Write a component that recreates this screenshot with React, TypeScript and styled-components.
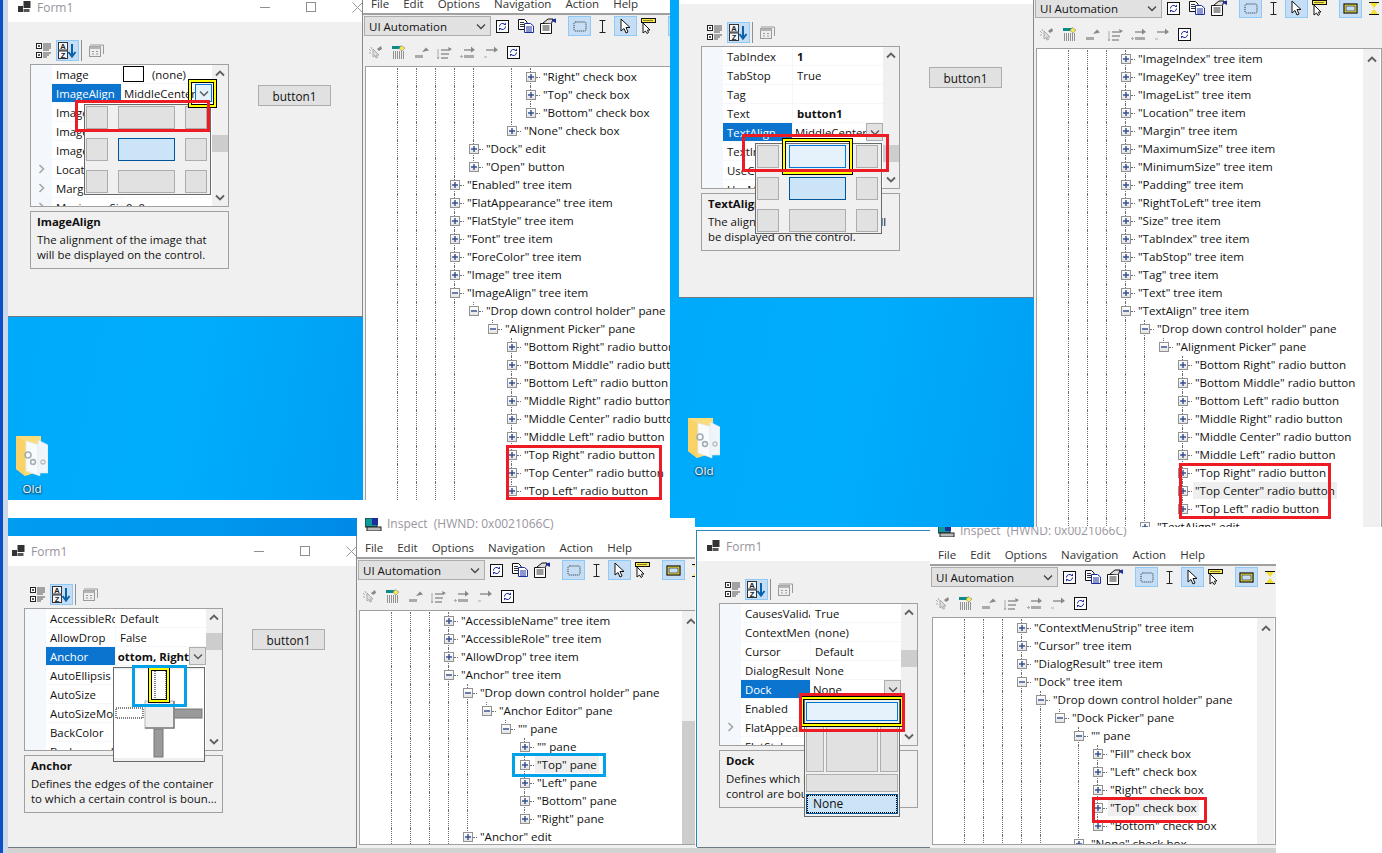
import React from 'react';
import styled, { createGlobalStyle } from 'styled-components';

const GlobalStyle = createGlobalStyle`
  html, body {
    margin: 0;
    padding: 0;
    background: #fff;
    overflow: hidden;
  }
  body {
    font-family: 'Open Sans', 'Liberation Sans', sans-serif;
    font-size: 11.4px;
    color: #111;
  }
`;

const Canvas = styled.div`
  position: relative;
  width: 1382px;
  height: 853px;
  overflow: hidden;
  background: #fff;
`;

const EdgeStrip = styled.div`
  position: absolute;
  left: 0;
  top: 0;
  width: 3px;
  height: 853px;
  background: #0b51c5;
  border-right: 5px solid #cdd7ea;
  z-index: 20;
`;

const BottomBar = styled.div`
  position: absolute;
  left: 8px;
  top: 848px;
  width: 1268px;
  height: 5px;
  background: #d2d2d2;
  z-index: 20;
`;

type Placed = { $x: number; $y: number; $w: number; $h: number; $z?: number };

const Desktop = styled.div<Placed & { $deep?: boolean }>`
  position: absolute;
  left: ${(p) => p.$x}px;
  top: ${(p) => p.$y}px;
  width: ${(p) => p.$w}px;
  height: ${(p) => p.$h}px;
  z-index: ${(p) => p.$z ?? 0};
  background: ${(p) =>
    p.$deep
      ? 'linear-gradient(100deg, #009cf2 0%, #0097ee 60%, #0089e6 100%)'
      : 'linear-gradient(100deg, #00a9fb 0%, #00adfc 55%, #009ff3 100%)'};
`;

const DesktopIcon = styled.div<{ $x: number; $y: number }>`
  position: absolute;
  left: ${(p) => p.$x}px;
  top: ${(p) => p.$y}px;
  width: 34px;
  display: flex;
  flex-direction: column;
  align-items: center;
  gap: 5px;
  color: #fff;
  font-size: 11.5px;
  line-height: 14px;
  text-shadow: 0 1px 2px #00324f, 0 0 2px #00324f;
`;

/* annotations drawn on top of the collage */
const Mark = styled.div<Placed & { $color: string }>`
  position: absolute;
  box-sizing: border-box;
  left: ${(p) => p.$x}px;
  top: ${(p) => p.$y}px;
  width: ${(p) => p.$w}px;
  height: ${(p) => p.$h}px;
  border: 3px solid ${(p) => p.$color};
  z-index: 30;
  pointer-events: none;
`;

const YellowMark = styled.div<Placed>`
  position: absolute;
  box-sizing: border-box;
  left: ${(p) => p.$x}px;
  top: ${(p) => p.$y}px;
  width: ${(p) => p.$w}px;
  height: ${(p) => p.$h}px;
  border: 1px solid #000;
  box-shadow: inset 0 0 0 2px #ffff00, inset 0 0 0 3px #000;
  z-index: 29;
  pointer-events: none;
`;

/* ---------- Form1 window ---------- */

const FormFrame = styled.div<{ $x: number; $y: number; $h: number; $z?: number; $framed?: boolean }>`
  position: absolute;
  left: ${(p) => p.$x}px;
  top: ${(p) => p.$y}px;
  width: 355px;
  height: ${(p) => p.$h}px;
  z-index: ${(p) => p.$z ?? 1};
  box-sizing: border-box;
  display: flex;
  flex-direction: column;
  background: #f0f0f0;
  border-right: 1px solid #8a8a8a;
  border-bottom: 1px solid #6c7a86;
  box-shadow: ${(p) => (p.$framed ? '-1px -1px 0 #2a86b8' : 'none')};
  overflow: ${(p) => (p.$framed ? 'visible' : 'hidden')};
`;

const FormTitle = styled.div`
  flex: 0 0 30px;
  display: flex;
  align-items: center;
  background: #fff;
  color: #98929c;
  font-size: 12px;
  padding-left: 10px;
  gap: 6px;
  overflow: hidden;
`;

const TitleControls = styled.div`
  margin-left: auto;
  margin-right: -18px;
  display: flex;
`;

const TitleControl = styled.div`
  width: 46px;
  display: flex;
  align-items: center;
  justify-content: center;
`;

const FormBody = styled.div`
  flex: 1;
  display: flex;
  align-items: flex-start;
  padding: 18px 0 0 22px;
`;

const PropertyPane = styled.div`
  width: 199px;
  flex: none;
  display: flex;
  flex-direction: column;
`;

const GridToolbar = styled.div`
  height: 21px;
  margin-bottom: 3px;
  display: flex;
  align-items: center;
  padding-left: 6px;
`;

const SortButton = styled.div`
  box-sizing: border-box;
  width: 23px;
  height: 21px;
  margin-left: 5px;
  display: flex;
  align-items: center;
  justify-content: center;
  background: #c5def5;
  border: 1px solid #90c8f6;
`;

const GridSeparator = styled.div`
  width: 1px;
  height: 21px;
  margin: 0 7px 0 2px;
  background: #8f8f8f;
`;

const GridWrap = styled.div`
  position: relative;
  height: 143px;
`;

const Grid = styled.div`
  box-sizing: border-box;
  height: 143px;
  display: flex;
  overflow: hidden;
  background: #fff;
  border: 1px solid #a0a0a0;
`;

const GridRows = styled.div`
  flex: 1;
  min-width: 0;
`;

const GridRow = styled.div`
  display: flex;
  height: 19px;
  box-sizing: border-box;
  border-bottom: 1px solid #f4f7fc;
`;

const Gutter = styled.div`
  flex: 0 0 21px;
  background: #f4f7fc;
  display: flex;
  align-items: center;
  justify-content: center;
`;

const NameCell = styled.div<{ $selected?: boolean }>`
  flex: 0 0 70px;
  box-sizing: border-box;
  padding-left: 4px;
  line-height: 19px;
  white-space: nowrap;
  overflow: hidden;
  border-right: 1px solid #f4f7fc;
  background: ${(p) => (p.$selected ? '#0a74cf' : 'transparent')};
  color: ${(p) => (p.$selected ? '#fff' : '#111')};
`;

const ValueCell = styled.div<{ $bold?: boolean; $clipLeft?: boolean; $tight?: boolean }>`
  flex: 1;
  min-width: 0;
  display: flex;
  align-items: center;
  justify-content: ${(p) => (p.$clipLeft ? 'flex-end' : 'flex-start')};
  margin-left: ${(p) => (p.$clipLeft ? '2px' : '0')};
  padding-left: ${(p) => (p.$tight ? '2px' : '4px')};
  line-height: 19px;
  white-space: nowrap;
  overflow: hidden;
  font-weight: ${(p) => (p.$bold ? 700 : 400)};
`;

const ValueText = styled.span`
  flex: 0 1 auto;
  min-width: 0;
  overflow: hidden;
`;

const ClippedValue = styled.span`
  flex: none;
`;

const Swatch = styled.span`
  flex: none;
  width: 19px;
  height: 14px;
  margin: 0 8px 0 -3px;
  border: 1px solid #000;
  background: #fff;
`;

const DropButton = styled.div<{ $hover?: boolean; $pinned?: boolean }>`
  flex: none;
  box-sizing: border-box;
  width: 17px;
  height: 18px;
  margin-left: ${(p) => (p.$pinned ? '0' : 'auto')};
  display: flex;
  align-items: center;
  justify-content: center;
  background: ${(p) => (p.$hover ? '#e5f1fb' : '#e1e1e1')};
  border: 1px solid ${(p) => (p.$hover ? '#0078d7' : '#adadad')};
`;

const GridScroll = styled.div`
  flex: 0 0 16px;
  display: flex;
  flex-direction: column;
  align-items: stretch;
  background: #f0f0f0;
`;

const ScrollArrow = styled.div<{ $end?: boolean }>`
  flex: 0 0 17px;
  display: flex;
  align-items: center;
  justify-content: center;
  margin-top: ${(p) => (p.$end ? 'auto' : '0')};
`;

const ScrollThumb = styled.div<{ $offset: number }>`
  flex: 0 0 17px;
  margin-top: ${(p) => p.$offset}px;
  background: #cdcdcd;
`;

const DescBox = styled.div`
  box-sizing: border-box;
  margin-top: 4px;
  height: 58px;
  padding: 2px 6px;
  border: 1px solid #a0a0a0;
  line-height: 15px;
  white-space: nowrap;
  overflow: hidden;
`;

const DescTitle = styled.div`
  font-weight: 700;
  margin-bottom: 3px;
`;

const FormButton = styled.div`
  box-sizing: border-box;
  flex: none;
  width: 73px;
  height: 21px;
  margin: 45px 0 0 29px;
  display: flex;
  align-items: center;
  justify-content: center;
  background: #e1e1e1;
  border: 1px solid #adadad;
  font-size: 11.8px;
`;

/* ---------- drop downs opened over the grid ---------- */

const DropOverlay = styled.div<{ $left: number; $top: number }>`
  position: absolute;
  left: ${(p) => p.$left}px;
  top: ${(p) => p.$top}px;
  box-sizing: border-box;
  z-index: 5;
  border: 1px solid #696969;
  background: #f0f0f0;
`;

const PickerGrid = styled.div`
  width: 125px;
  height: 89px;
  box-sizing: border-box;
  padding: 1px;
  display: grid;
  grid-template-columns: 22px 57px 22px;
  grid-auto-rows: 23px;
  column-gap: 10px;
  row-gap: 9px;
`;

type CellState = 'idle' | 'hover' | 'checked';

const cellFill = { idle: '#e1e1e1', hover: '#e5f1fb', checked: '#cce4f7' };
const cellLine = { idle: '#adadad', hover: '#0078d7', checked: '#005499' };

const PickerCell = styled.div<{ $state: CellState }>`
  box-sizing: border-box;
  background: ${(p) => cellFill[p.$state]};
  border: 1px solid ${(p) => cellLine[p.$state]};
`;

const DockGrid = styled.div`
  width: 94px;
  height: 118px;
  box-sizing: border-box;
  padding: 4px 1px 2px 1px;
  display: grid;
  grid-template-columns: 18px 52px 18px;
  grid-template-rows: 19px 49px 18px 20px;
  gap: 2px;
`;

const DockCell = styled(PickerCell)<{ $wide?: boolean }>`
  grid-column: ${(p) => (p.$wide ? '1 / 4' : 'auto')};
`;

const DockNone = styled(DockCell)`
  outline: 1px dotted #000;
  outline-offset: -2px;
  border-color: #005499;
  padding-left: 6px;
  line-height: 18px;
  font-size: 12px;
`;

/* ---------- Inspect window ---------- */

const InspectFrame = styled.div<Placed>`
  position: absolute;
  left: ${(p) => p.$x}px;
  top: ${(p) => p.$y}px;
  width: ${(p) => p.$w}px;
  height: ${(p) => p.$h}px;
  z-index: ${(p) => p.$z ?? 2};
  overflow: hidden;
  background: #f0f0f0;
`;

const InspectInner = styled.div<{ $w: number }>`
  width: ${(p) => p.$w}px;
  height: 100%;
  display: flex;
  flex-direction: column;
`;

const InspectTitle = styled.div<{ $h: number; $raise: number }>`
  flex: 0 0 ${(p) => p.$h}px;
  box-sizing: border-box;
  display: flex;
  align-items: center;
  gap: 4px;
  padding: 0 0 ${(p) => p.$raise}px 8px;
  background: #fff;
  color: #9a959e;
  font-size: 12px;
  white-space: pre;
  overflow: hidden;
`;

const MenuBar = styled.div`
  flex: 0 0 20px;
  box-sizing: content-box;
  display: flex;
  align-items: center;
  padding-left: 1px;
  background: #fff;
  border-bottom: 2px solid #a0a0a0;
  font-size: 11.5px;
  color: #333;
`;

const MenuItem = styled.span`
  padding: 0 7px;
  color: #333;
`;

const ToolRow = styled.div`
  flex: 0 0 22px;
  display: flex;
  align-items: center;
`;

const ToolRowTwo = styled.div`
  flex: 0 0 29px;
  box-sizing: border-box;
  display: flex;
  align-items: center;
  padding: 2px 0 0 1px;
`;

const ModeCombo = styled.div`
  box-sizing: border-box;
  flex: none;
  width: 127px;
  height: 20px;
  margin-left: 1px;
  padding: 0 4px;
  display: flex;
  align-items: center;
  justify-content: space-between;
  background: #e1e1e1;
  border: 1px solid #adadad;
  font-size: 11.5px;
`;

const ToolSlot = styled.div<{ $on?: boolean; $gap?: boolean }>`
  box-sizing: border-box;
  flex: none;
  width: 23px;
  height: 20px;
  margin-left: ${(p) => (p.$gap ? '8px' : '0')};
  display: flex;
  align-items: center;
  justify-content: center;
  background: ${(p) => (p.$on ? '#c5def5' : 'transparent')};
  border: 1px solid ${(p) => (p.$on ? '#90c8f6' : 'transparent')};
`;

const TreeBox = styled.div<{ $end: number }>`
  flex: 1;
  min-height: 0;
  margin: 0 0 ${(p) => p.$end}px 2px;
  display: flex;
  background: #fff;
  border: 1px solid #a0a0a0;
  overflow: hidden;
`;

const TreeRows = styled.div`
  flex: 1;
  min-width: 0;
  padding: 1px 0 0 22px;
  overflow: hidden;
`;

const TreeRowLine = styled.div`
  display: flex;
  height: 18px;
  white-space: nowrap;
`;

const Guide = styled.div<{ $on: boolean }>`
  flex: none;
  width: 10px;
  margin-left: 9px;
  border-left: 1px ${(p) => (p.$on ? 'dotted #6f6f6f' : 'solid transparent')};
  box-sizing: border-box;
`;

const ExpanderCell = styled.div<{ $more: boolean }>`
  flex: none;
  position: relative;
  width: 19px;
  height: 18px;
  display: flex;
  align-items: center;
  &::before {
    content: '';
    position: absolute;
    left: 9px;
    top: 0;
    height: ${(p) => (p.$more ? '100%' : '50%')};
    border-left: 1px dotted #6f6f6f;
  }
  &::after {
    content: '';
    position: absolute;
    left: 15px;
    top: 9px;
    width: 4px;
    border-top: 1px dotted #6f6f6f;
  }
`;

const Expander = styled.div<{ $open: boolean }>`
  position: relative;
  z-index: 1;
  box-sizing: border-box;
  width: 10px;
  height: 10px;
  margin-left: 5px;
  border: 1px solid #919191;
  background: linear-gradient(#fff, #e4e4e4);
  &::before {
    content: '';
    position: absolute;
    left: 1px;
    top: 3px;
    width: 6px;
    height: 2px;
    background: #2f4a8c;
    transform: scaleY(0.7);
  }
  &::after {
    content: '';
    display: ${(p) => (p.$open ? 'none' : 'block')};
    position: absolute;
    left: 3px;
    top: 1px;
    width: 2px;
    height: 6px;
    background: #2f4a8c;
    transform: scaleX(0.7);
  }
`;

const TreeLabel = styled.div<{ $selected?: boolean }>`
  height: 17px;
  line-height: 17px;
  margin-left: 1px;
  padding: 0 2px;
  background: ${(p) => (p.$selected ? '#efefef' : 'transparent')};
  font-size: 11.6px;
`;

const TreeScroll = styled.div`
  flex: 0 0 17px;
  margin-right: 1px;
  display: flex;
  flex-direction: column;
  background: #f0f0f0;
`;

const TreeArrow = styled.div`
  flex: 0 0 20px;
  display: flex;
  align-items: center;
  justify-content: center;
`;

const TreeThumb = styled.div<{ $offset: number }>`
  flex: 1;
  margin-top: ${(p) => p.$offset}px;
  background: #cdcdcd;
`;

/* ---------- drawings ---------- */

const Chevron = ({ up = false, color = '#555', w = 1.3 }: { up?: boolean; color?: string; w?: number }) => (
  <svg width="10" height="7" viewBox="0 0 10 7">
    <path d={up ? 'M1 5.5L5 1.5L9 5.5' : 'M1 1.5L5 5.5L9 1.5'} fill="none" stroke={color} strokeWidth={w} />
  </svg>
);

const SideChevron = () => (
  <svg width="7" height="10" viewBox="0 0 7 10">
    <path d="M1.5 1L5.5 5L1.5 9" fill="none" stroke="#a5a5a5" strokeWidth="1.6" />
  </svg>
);

const FormIcon = () => (
  <svg width="13" height="12" viewBox="0 0 13 12">
    <rect x="0" y="5" width="5" height="6" fill="#333" />
    <rect x="5.5" y="0" width="7" height="7" fill="#333" />
    <rect x="5.5" y="8" width="6" height="3" fill="#555" />
  </svg>
);

const MinimizeGlyph = () => (
  <svg width="10" height="10"><path d="M0 5.5H10" stroke="#8f8f8f" /></svg>
);
const MaximizeGlyph = () => (
  <svg width="10" height="10"><rect x=".5" y=".5" width="9" height="9" fill="none" stroke="#8f8f8f" /></svg>
);
const CloseGlyph = () => (
  <svg width="11" height="11"><path d="M.5 .5L10.5 10.5M10.5 .5L.5 10.5" stroke="#9a9a9a" /></svg>
);

const CategorizedIcon = () => (
  <svg width="15" height="15" viewBox="0 0 15 15">
    <rect x="0.5" y="0.5" width="5" height="5" fill="#fff" stroke="#222" />
    <rect x="0.5" y="9.5" width="5" height="5" fill="#fff" stroke="#222" />
    <path d="M2 3H4M3 2V4M2 12H4M3 11V13" stroke="#222" />
    <path d="M7 1H15M7 3H15M7 5H15M7 7H13M7 10H15M7 12H13M7 14H11" stroke="#555" />
  </svg>
);

const AzIcon = () => (
  <svg width="19" height="17" viewBox="0 0 19 17">
    <rect x="0.5" y="0.5" width="9" height="7.5" fill="#f4f8fc" stroke="#333" />
    <rect x="0.5" y="9" width="9" height="7.5" fill="#f4f8fc" stroke="#333" />
    <text x="5" y="7" fontSize="7.5" fontWeight="700" textAnchor="middle" fontFamily="Liberation Sans" fill="#222">A</text>
    <text x="5" y="15.5" fontSize="7.5" fontWeight="700" textAnchor="middle" fontFamily="Liberation Sans" fill="#222">Z</text>
    <path d="M14 2V13M10.5 10L14 14.5L17.5 10" fill="none" stroke="#0a62a8" strokeWidth="2" />
  </svg>
);

const PagesIcon = () => (
  <svg width="15" height="13" viewBox="0 0 15 13">
    <rect x="0.5" y="2.5" width="11" height="10" fill="#eee" stroke="#9a9a9a" />
    <path d="M1 1H14.5V10" fill="none" stroke="#9a9a9a" />
    <rect x="0.5" y="2.5" width="11" height="2.5" fill="#b4b4b4" />
    <path d="M3 7.5H5M3 10H5M7 7.5H9M7 10H9" stroke="#999" />
  </svg>
);

const FolderIcon = () => (
  <svg width="32" height="42" viewBox="0 0 32 42">
    <path d="M0 1H25V36L9 41L0 34Z" fill="#fbdc7c" />
    <path d="M0 1L9 6V41L0 34Z" fill="#f9d268" />
    <path d="M10 6L24 10V41L10 36Z" fill="#f7fbfd" stroke="#dce6ea" strokeWidth=".6" />
    <path d="M22 5L32 10V38L22 38Z" fill="#eef6fb" stroke="#dce6ea" strokeWidth=".6" />
    <circle cx="12" cy="20" r="3" fill="none" stroke="#a5aeb4" strokeWidth="1.6" />
    <circle cx="17" cy="27" r="2.4" fill="none" stroke="#a5aeb4" strokeWidth="1.6" />
    <circle cx="27" cy="27" r="2" fill="none" stroke="#b7bfc4" strokeWidth="1.4" />
  </svg>
);

const RefreshIcon = () => (
  <svg width="13" height="13" viewBox="0 0 13 13">
    <rect x="0.5" y="0.5" width="12" height="12" fill="#fff" stroke="#111" />
    <path d="M3.5 6.5A3 3 0 0 1 8.6 4.3M9.5 6.5A3 3 0 0 1 4.4 8.7" fill="none" stroke="#1c2d9c" />
    <path d="M7.5 5H10V2.5ZM5.5 8H3V10.5Z" fill="#1c2d9c" />
  </svg>
);

const CopyIcon = () => (
  <svg width="16" height="14" viewBox="0 0 16 14">
    <path d="M.5 .5H6.5L9 3V10.5H.5Z" fill="#fff" stroke="#111" />
    <path d="M2 3.5H6M2 5.5H6M2 7.5H6" stroke="#333" />
    <path d="M6.5 4.5H12.5L15.5 7V13.5H6.5Z" fill="#fff" stroke="#1c2d9c" />
    <path d="M8 8H14M8 10H14M8 12H14" stroke="#1c2d9c" />
  </svg>
);

const PropsIcon = () => (
  <svg width="17" height="16" viewBox="0 0 17 16">
    <path d="M.5 5.5H11.5V15.5H.5Z" fill="#fff" stroke="#111" />
    <path d="M2.5 8H9.5M2.5 10H9.5M2.5 12H9.5" stroke="#333" />
    <path d="M3 5L8 1H13L11.5 5.5" fill="#ddd" stroke="#111" />
    <path d="M12 1.5L16 .5V5L13 3.5Z" fill="#1c2d9c" />
  </svg>
);

const FocusRectIcon = () => (
  <svg width="14" height="11" viewBox="0 0 14 11">
    <rect x="1" y="1" width="12" height="9" rx="1.5" fill="none" stroke="#222" strokeDasharray="1 1" />
  </svg>
);

const CaretIcon = () => (
  <svg width="7" height="13" viewBox="0 0 7 13">
    <path d="M.5 .5H6.5M.5 12.5H6.5M3.5 .5V12.5" fill="none" stroke="#222" />
  </svg>
);

const ArrowCursor = () => (
  <svg width="11" height="16" viewBox="0 0 11 16">
    <path d="M1 1V13L4 10.5L6 15L8 14L6 9.5H10Z" fill="#fff" stroke="#111" />
  </svg>
);

const TooltipIcon = () => (
  <svg width="15" height="16" viewBox="0 0 15 16">
    <rect x="0.5" y="0.5" width="14" height="4" fill="#f7ea4a" stroke="#111" />
    <path d="M2.5 2.5H12" stroke="#111" strokeDasharray="1 1" />
    <path d="M2 5V15L4.5 13L6 15.5L7.5 14.5L6.5 12H9Z" fill="#fff" stroke="#111" />
  </svg>
);

const HighlightIcon = () => (
  <svg width="15" height="11" viewBox="0 0 15 11">
    <rect x="1" y="1" width="13" height="9" fill="#f7ea4a" stroke="#111" strokeWidth="1.2" />
    <rect x="3" y="3" width="9" height="5" fill="#c5def5" stroke="#111" strokeWidth=".6" />
  </svg>
);

const HourglassIcon = () => (
  <svg width="10" height="13" viewBox="0 0 10 13">
    <path d="M0 .5H10M0 12.5H10" stroke="#111" />
    <path d="M1 1H9L5 6ZM1 12L5 7L9 12Z" fill="#f2e02c" />
  </svg>
);

const WatchPointerIcon = () => (
  <svg width="15" height="15" viewBox="0 0 15 15">
    <path d="M5 4V12L7 10.5L8 13L9.5 12.5L8.5 10H11Z" fill="#ddd" stroke="#aaa" />
    <path d="M9 4L13 1L14 4L11 6Z" fill="#888" />
    <path d="M1 4L3 6M1 8H3M3 2L4 4" stroke="#aaa" />
  </svg>
);

const MarkerIcon = () => (
  <svg width="14" height="15" viewBox="0 0 14 15">
    <rect x="0" y="1" width="10" height="3" fill="#0d8a8a" />
    <path d="M9 .5L13 3L10 6L7 3.5Z" fill="#f7ea4a" stroke="#777" strokeWidth=".5" />
    <path d="M1 7H12M1 9H12M1 11H12M1 13H12" stroke="#333" strokeDasharray="1 1" />
  </svg>
);

const ParentArrowIcon = () => (
  <svg width="14" height="14" viewBox="0 0 14 14">
    <rect x="0" y="9" width="8" height="3" fill="#aaa" />
    <path d="M7 6L11 1.5L14 4.5Z" fill="#888" />
  </svg>
);

const ChildArrowIcon = () => (
  <svg width="15" height="14" viewBox="0 0 15 14">
    <path d="M1 3V13M0 11L1 13L2 11" fill="none" stroke="#aaa" />
    <rect x="4" y="3" width="8" height="2" fill="#aaa" />
    <rect x="4" y="7" width="8" height="2" fill="#aaa" />
    <rect x="4" y="11" width="7" height="2" fill="#aaa" />
    <path d="M11 1L15 3L12 5Z" fill="#888" />
  </svg>
);

const NextArrowIcon = () => (
  <svg width="16" height="14" viewBox="0 0 16 14">
    <rect x="4" y="3" width="8" height="2" fill="#aaa" />
    <path d="M11 0.5L15 4L11 6.5Z" fill="#888" />
    <rect x="4" y="9" width="10" height="3" fill="#aaa" />
    <path d="M0 10.5H3M1.5 9V12" stroke="#aaa" />
  </svg>
);

const PrevArrowIcon = () => (
  <svg width="16" height="14" viewBox="0 0 16 14">
    <rect x="3" y="3" width="9" height="2" fill="#aaa" />
    <path d="M11 0.5L15 4L11 6.5Z" fill="#888" />
    <path d="M1 11H4" stroke="#aaa" />
  </svg>
);

const InspectIcon = () => (
  <svg width="18" height="14" viewBox="0 0 18 14">
    <rect x="0" y="1" width="12" height="9" fill="#0d9a9a" stroke="#222" />
    <rect x="7" y="0" width="6" height="8" fill="#1c2d9c" />
    <rect x="2" y="10" width="14" height="4" fill="#bbb" stroke="#222" />
  </svg>
);

const AnchorDiagram = () => (
  <svg width="90" height="90" viewBox="0 0 90 90">
    <rect x="0" y="0" width="90" height="90" fill="#fff" />
    <rect x="0" y="0" width="90" height="1.5" fill="#eee" />
    <rect x="41" y="2" width="11" height="30" fill="#fff" stroke="#000" strokeDasharray="1 1" />
    <rect x="2" y="40" width="27" height="10" fill="#fff" stroke="#000" strokeDasharray="1 1" />
    <rect x="60" y="41" width="28" height="9" fill="#9a9a9a" stroke="#777" />
    <rect x="40" y="61" width="9" height="28" fill="#9a9a9a" stroke="#777" />
    <rect x="31" y="33" width="29" height="27" fill="#eee" stroke="#b5b5b5" />
    <path d="M60 33V60H31" fill="none" stroke="#808080" strokeWidth="1.6" />
  </svg>
);

/* ---------- data ---------- */

type TreeItem = { level: number; label: string; open?: boolean; selected?: boolean };

const item = (level: number, label: string, open = false, selected = false): TreeItem => ({
  level,
  label,
  open,
  selected,
});

const alignmentRows = [
  '"Bottom Right" radio button',
  '"Bottom Middle" radio button',
  '"Bottom Left" radio button',
  '"Middle Right" radio button',
  '"Middle Center" radio button',
  '"Middle Left" radio button',
  '"Top Right" radio button',
  '"Top Center" radio button',
  '"Top Left" radio button',
].map((label) => item(6, label));

const imageAlignTree: TreeItem[] = [
  item(7, '"Right" check box'),
  item(7, '"Top" check box'),
  item(7, '"Bottom" check box'),
  item(6, '"None" check box'),
  item(4, '"Dock" edit'),
  item(4, '"Open" button'),
  ...['Enabled', 'FlatAppearance', 'FlatStyle', 'Font', 'ForeColor', 'Image'].map((n) =>
    item(3, `"${n}" tree item`),
  ),
  item(3, '"ImageAlign" tree item', true),
  item(4, '"Drop down control holder" pane', true),
  item(5, '"Alignment Picker" pane', true),
  ...alignmentRows,
];

const textAlignTree: TreeItem[] = [
  ...[
    'ImageIndex',
    'ImageKey',
    'ImageList',
    'Location',
    'Margin',
    'MaximumSize',
    'MinimumSize',
    'Padding',
    'RightToLeft',
    'Size',
    'TabIndex',
    'TabStop',
    'Tag',
    'Text',
  ].map((n) => item(3, `"${n}" tree item`)),
  item(3, '"TextAlign" tree item', true),
  item(4, '"Drop down control holder" pane', true),
  item(5, '"Alignment Picker" pane', true),
  ...alignmentRows.map((r) =>
    r.label.includes('Top Center') ? { ...r, selected: true } : r,
  ),
  item(4, '"TextAlign" edit'),
];

const anchorTree: TreeItem[] = [
  item(3, '"AccessibleName" tree item'),
  item(3, '"AccessibleRole" tree item'),
  item(3, '"AllowDrop" tree item'),
  item(3, '"Anchor" tree item', true),
  item(4, '"Drop down control holder" pane', true),
  item(5, '"Anchor Editor" pane', true),
  item(6, '"" pane', true),
  item(7, '"" pane'),
  item(7, '"Top" pane', false, true),
  item(7, '"Left" pane'),
  item(7, '"Bottom" pane'),
  item(7, '"Right" pane'),
  item(4, '"Anchor" edit'),
];

const dockTree: TreeItem[] = [
  item(3, '"ContextMenuStrip" tree item'),
  item(3, '"Cursor" tree item'),
  item(3, '"DialogResult" tree item'),
  item(3, '"Dock" tree item', true),
  item(4, '"Drop down control holder" pane', true),
  item(5, '"Dock Picker" pane', true),
  item(6, '"" pane', true),
  item(7, '"Fill" check box'),
  item(7, '"Left" check box'),
  item(7, '"Right" check box'),
  item(7, '"Top" check box', false, true),
  item(7, '"Bottom" check box'),
  item(6, '"None" check box'),
];

type GridEntry = {
  name: string;
  value?: string;
  bold?: boolean;
  selected?: boolean;
  expand?: boolean;
  swatch?: boolean;
  drop?: 'plain' | 'hover';
  clipLeft?: boolean;
};

const imageGrid: GridEntry[] = [
  { name: 'Image', value: '(none)', swatch: true },
  { name: 'ImageAlign', value: 'MiddleCenter', selected: true, drop: 'hover' },
  { name: 'ImageIndex' },
  { name: 'ImageKey' },
  { name: 'ImageList' },
  { name: 'Location', expand: true },
  { name: 'Margin', expand: true },
  { name: 'MaximumSize', value: '0, 0', expand: true },
];

const textGrid: GridEntry[] = [
  { name: 'TabIndex', value: '1', bold: true },
  { name: 'TabStop', value: 'True' },
  { name: 'Tag' },
  { name: 'Text', value: 'button1', bold: true },
  { name: 'TextAlign', value: 'MiddleCenter', selected: true, drop: 'plain' },
  { name: 'TextImageRelation' },
  { name: 'UseCompatibleTextRendering' },
  { name: 'UseMnemonic' },
];

const anchorGrid: GridEntry[] = [
  { name: 'AccessibleRole', value: 'Default' },
  { name: 'AllowDrop', value: 'False' },
  { name: 'Anchor', value: 'Bottom, Right', bold: true, selected: true, drop: 'plain', clipLeft: true },
  { name: 'AutoEllipsis' },
  { name: 'AutoSize' },
  { name: 'AutoSizeMode' },
  { name: 'BackColor' },
  { name: 'BackgroundImage' },
];

const dockGrid: GridEntry[] = [
  { name: 'CausesValidation', value: 'True' },
  { name: 'ContextMenuStrip', value: '(none)' },
  { name: 'Cursor', value: 'Default' },
  { name: 'DialogResult', value: 'None' },
  { name: 'Dock', value: 'None', selected: true, drop: 'plain' },
  { name: 'Enabled' },
  { name: 'FlatAppearance', expand: true },
  { name: 'FlatStyle' },
];

const menuItems = ['File', 'Edit', 'Options', 'Navigation', 'Action', 'Help'];

/* ---------- parts ---------- */

// a guide column continues while a later row still sits on that column
const hasLine = (rows: TreeItem[], from: number, col: number, tail: number[]) => {
  for (let j = from + 1; j < rows.length; j++) {
    if (rows[j].level < col) return false;
    if (rows[j].level === col) return true;
  }
  return tail.includes(col);
};

const Tree: React.FC<{ rows: TreeItem[]; tail: number[] }> = ({ rows, tail }) => (
  <TreeRows>
    {rows.map((row, i) => (
      <TreeRowLine key={i}>
        {Array.from({ length: row.level }, (_, col) => (
          <Guide key={col} $on={hasLine(rows, i, col, tail)} />
        ))}
        <ExpanderCell $more={hasLine(rows, i, row.level, tail)}>
          <Expander $open={!!row.open} />
        </ExpanderCell>
        <TreeLabel $selected={row.selected}>{row.label}</TreeLabel>
      </TreeRowLine>
    ))}
  </TreeRows>
);

type InspectProps = {
  x: number;
  y: number;
  w: number;
  h: number;
  innerW?: number;
  z?: number;
  titleH?: number;
  titleRaise?: number;
  rows: TreeItem[];
  tail: number[];
  thumbAt?: number;
  bottomGap?: number;
};

const InspectWindow: React.FC<InspectProps> = ({
  x,
  y,
  w,
  h,
  innerW,
  z,
  titleH,
  titleRaise = 0,
  rows,
  tail,
  thumbAt,
  bottomGap = 0,
}) => (
  <InspectFrame $x={x} $y={y} $w={w} $h={h} $z={z}>
    <InspectInner $w={innerW ?? w}>
      {titleH ? (
        <InspectTitle $h={titleH} $raise={titleRaise}>
          <InspectIcon />
          {'Inspect  (HWND: 0x0021066C)'}
        </InspectTitle>
      ) : null}
      <MenuBar>
        {menuItems.map((m) => (
          <MenuItem key={m}>{m}</MenuItem>
        ))}
      </MenuBar>
      <ToolRow>
        <ModeCombo>
          UI Automation
          <Chevron color="#444" />
        </ModeCombo>
        <ToolSlot><RefreshIcon /></ToolSlot>
        <ToolSlot><CopyIcon /></ToolSlot>
        <ToolSlot><PropsIcon /></ToolSlot>
        <ToolSlot $on $gap><FocusRectIcon /></ToolSlot>
        <ToolSlot><CaretIcon /></ToolSlot>
        <ToolSlot $on><ArrowCursor /></ToolSlot>
        <ToolSlot><TooltipIcon /></ToolSlot>
        <ToolSlot $on $gap><HighlightIcon /></ToolSlot>
        <ToolSlot><HourglassIcon /></ToolSlot>
      </ToolRow>
      <ToolRowTwo>
        <ToolSlot><WatchPointerIcon /></ToolSlot>
        <ToolSlot><MarkerIcon /></ToolSlot>
        <ToolSlot><ParentArrowIcon /></ToolSlot>
        <ToolSlot><ChildArrowIcon /></ToolSlot>
        <ToolSlot><NextArrowIcon /></ToolSlot>
        <ToolSlot><PrevArrowIcon /></ToolSlot>
        <ToolSlot><RefreshIcon /></ToolSlot>
      </ToolRowTwo>
      <TreeBox $end={bottomGap}>
        <Tree rows={rows} tail={tail} />
        <TreeScroll>
          <TreeArrow><Chevron up color="#606060" w={1.8} /></TreeArrow>
          {thumbAt !== undefined ? <TreeThumb $offset={thumbAt} /> : null}
        </TreeScroll>
      </TreeBox>
    </InspectInner>
  </InspectFrame>
);

type FormProps = {
  x: number;
  y: number;
  h: number;
  z?: number;
  framed?: boolean;
  grid: GridEntry[];
  thumb: number;
  title: string;
  lines: string[];
  children?: React.ReactNode;
};

const FormWindow: React.FC<FormProps> = ({ x, y, h, z, framed, grid, thumb, title, lines, children }) => (
  <FormFrame $x={x} $y={y} $h={h} $z={z} $framed={framed}>
    <FormTitle>
      <FormIcon />
      Form1
      <TitleControls>
        <TitleControl><MinimizeGlyph /></TitleControl>
        <TitleControl><MaximizeGlyph /></TitleControl>
        <TitleControl><CloseGlyph /></TitleControl>
      </TitleControls>
    </FormTitle>
    <FormBody>
      <PropertyPane>
        <GridToolbar>
          <CategorizedIcon />
          <SortButton><AzIcon /></SortButton>
          <GridSeparator />
          <PagesIcon />
        </GridToolbar>
        <GridWrap>
          <Grid>
            <GridRows>
              {grid.map((row) => (
                <GridRow key={row.name}>
                  <Gutter>{row.expand ? <SideChevron /> : null}</Gutter>
                  <NameCell $selected={row.selected}>{row.name}</NameCell>
                  <ValueCell $bold={row.bold} $clipLeft={row.clipLeft} $tight={!!row.drop}>
                    {row.swatch ? <Swatch /> : null}
                    {row.clipLeft ? (
                      <ClippedValue>{row.value}</ClippedValue>
                    ) : (
                      <ValueText>{row.value}</ValueText>
                    )}
                    {row.drop ? (
                      <DropButton $hover={row.drop === 'hover'} $pinned={row.clipLeft}>
                        <Chevron color="#555" />
                      </DropButton>
                    ) : null}
                  </ValueCell>
                </GridRow>
              ))}
            </GridRows>
            <GridScroll>
              <ScrollArrow><Chevron up color="#606060" w={1.8} /></ScrollArrow>
              <ScrollThumb $offset={thumb} />
              <ScrollArrow $end><Chevron color="#606060" w={1.8} /></ScrollArrow>
            </GridScroll>
          </Grid>
          {children}
        </GridWrap>
        <DescBox>
          <DescTitle>{title}</DescTitle>
          {lines.map((l) => (
            <div key={l}>{l}</div>
          ))}
        </DescBox>
      </PropertyPane>
      <FormButton>button1</FormButton>
    </FormBody>
  </FormFrame>
);

const AlignmentPicker: React.FC<{ left: number; top: number; hover?: number }> = ({ left, top, hover }) => (
  <DropOverlay $left={left} $top={top}>
    <PickerGrid>
      {Array.from({ length: 9 }, (_, i) => (
        <PickerCell key={i} $state={i === 4 ? 'checked' : i === hover ? 'hover' : 'idle'} />
      ))}
    </PickerGrid>
  </DropOverlay>
);

const DockPicker: React.FC<{ left: number; top: number }> = ({ left, top }) => (
  <DropOverlay $left={left} $top={top}>
    <DockGrid>
      <DockCell $wide $state="hover" />
      <DockCell $state="idle" />
      <DockCell $state="idle" />
      <DockCell $state="idle" />
      <DockCell $wide $state="idle" />
      <DockNone $wide $state="checked">None</DockNone>
    </DockGrid>
  </DropOverlay>
);

export default function App() {
  return (
    <Canvas>
      <GlobalStyle />
      <EdgeStrip />

      <Desktop $x={8} $y={0} $w={355} $h={500}>
        <DesktopIcon $x={7} $y={435}>
          <FolderIcon />
          Old
        </DesktopIcon>
      </Desktop>
      <Desktop $x={8} $y={518} $w={349} $h={20} $z={1} $deep />
      <Desktop $x={670} $y={0} $w={365} $h={527} $z={5}>
        <DesktopIcon $x={17} $y={417}>
          <FolderIcon />
          Old
        </DesktopIcon>
      </Desktop>

      <FormWindow
        x={8}
        y={-8}
        h={325}
        grid={imageGrid}
        thumb={53}
        title="ImageAlign"
        lines={['The alignment of the image that', 'will be displayed on the control.']}
      >
        <AlignmentPicker left={54} top={40} />
      </FormWindow>
      <InspectWindow x={363} y={-7} w={338} h={507} z={1} rows={imageAlignTree} tail={[0, 1, 2, 3]} bottomGap={-2} />

      <FormWindow
        x={679}
        y={-26}
        h={324}
        z={6}
        grid={textGrid}
        thumb={81}
        title="TextAlign"
        lines={['The alignment of the text that will', 'be displayed on the control.']}
      >
        <AlignmentPicker left={54} top={97} hover={1} />
      </FormWindow>
      <InspectWindow x={1034} y={-25} w={348} h={552} z={6} rows={textAlignTree} tail={[0, 1, 2, 3]} bottomGap={-2} />

      <FormWindow
        x={2}
        y={536}
        h={312}
        z={7}
        grid={anchorGrid}
        thumb={7}
        title="Anchor"
        lines={['Defines the edges of the container', 'to which a certain control is boun...']}
      >
        <DropOverlay $left={89} $top={59}>
          <AnchorDiagram />
        </DropOverlay>
      </FormWindow>
      <InspectWindow
        x={357}
        y={518}
        w={338}
        innerW={344}
        h={330}
        z={8}
        titleH={19}
        titleRaise={8}
        rows={anchorTree}
        tail={[0, 1, 2, 3]}
        thumbAt={90}
        bottomGap={3}
      />

      <FormWindow
        x={697}
        y={531}
        h={317}
        z={3}
        framed
        grid={dockGrid}
        thumb={29}
        title="Dock"
        lines={['Defines which borders of the', 'control are bound to the contai...']}
      >
        <DockPicker left={85} top={94} />
      </FormWindow>
      <InspectWindow
        x={930}
        y={519}
        w={346}
        h={329}
        z={4}
        titleH={25}
        titleRaise={3}
        rows={dockTree}
        tail={[0, 1, 2, 3, 4]}
        bottomGap={3}
      />

      <BottomBar />

      <Mark $x={75} $y={100} $w={135} $h={32} $color="#ed1c24" />
      <YellowMark $x={188} $y={79} $w={29} $h={29} />
      <Mark $x={506} $y={445} $w={156} $h={55} $color="#ed1c24" />
      <Mark $x={742} $y={134} $w={147} $h={38} $color="#ed1c24" />
      <YellowMark $x={782} $y={138} $w={71} $h={37} />
      <Mark $x={1179} $y={463} $w={152} $h={56} $color="#ed1c24" />
      <Mark $x={132} $y={665} $w={55} $h={42} $color="#00a2e8" />
      <YellowMark $x={148} $y={667} $w={22} $h={36} />
      <Mark $x={512} $y={753} $w={94} $h={24} $color="#00a2e8" />
      <Mark $x={799} $y={693} $w={106} $h={39} $color="#ed1c24" />
      <YellowMark $x={800} $y={696} $w={104} $h={31} />
      <Mark $x={1092} $y={797} $w={115} $h={26} $color="#ed1c24" />
    </Canvas>
  );
}
